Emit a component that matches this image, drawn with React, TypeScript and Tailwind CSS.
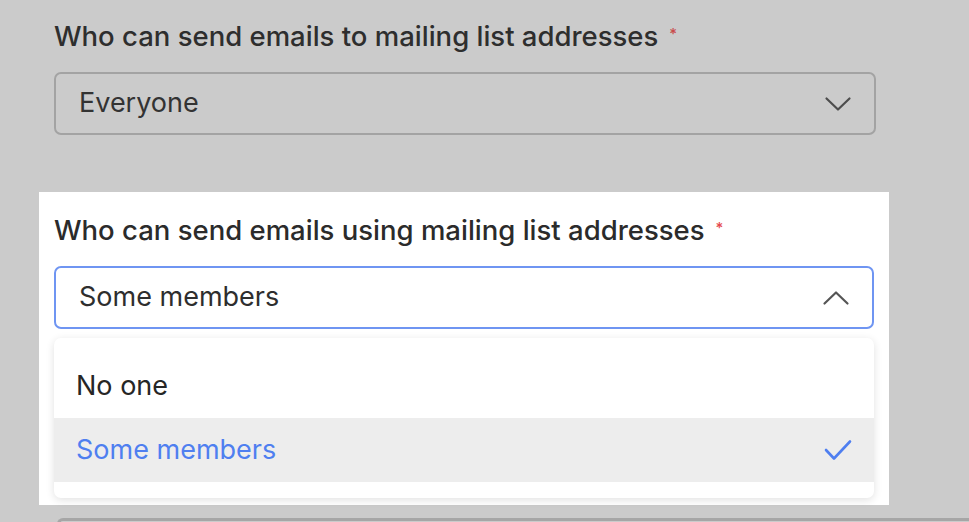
const font = { fontFamily: 'Inter, "Noto Sans", sans-serif' };

function Label({ text, dim }: { text: string; dim?: boolean }) {
  return (
    <div className={`flex items-center h-[30px] text-[27.5px] font-medium ${dim ? 'text-[#2e2e2e]' : 'text-[#2b2b2b]'}`}>
      <span>{text}</span>
      <span className={`ml-[11px] text-[15px] -mt-[6px] ${dim ? 'text-[#c94b4b]' : 'text-[#e5484d]'}`}>*</span>
    </div>
  );
}

function Chevron({ up, color }: { up?: boolean; color: string }) {
  return (
    <svg width="28" height="16" viewBox="0 0 28 16" fill="none" className={up ? 'rotate-180' : ''}>
      <polyline points="2.5,2.5 14,13.5 25.5,2.5" stroke={color} strokeWidth="2.2" strokeLinecap="round" strokeLinejoin="round" />
    </svg>
  );
}

function CheckMark() {
  return (
    <svg width="28" height="22" viewBox="0 0 28 22" fill="none">
      <polyline points="2,11 10,19.5 26,2.5" stroke="#4f7ff0" strokeWidth="2.6" strokeLinecap="round" strokeLinejoin="round" />
    </svg>
  );
}

export default function App() {
  return (
    <div className="w-[969px] h-[522px] overflow-hidden bg-[#cbcbcb] pt-[22px]" style={font}>
      {/* dimmed field */}
      <div className="pl-[54px] w-[876px]">
        <Label text="Who can send emails to mailing list addresses" dim />
        <div className="mt-[20px] h-[63px] rounded-[7px] border-2 border-[#a3a3a3] flex items-center justify-between pl-[23px] pr-[22px]">
          <span className="text-[27px] text-[#333333]">Everyone</span>
          <Chevron color="#4d4d4d" />
        </div>
      </div>

      {/* focused field */}
      <div className="ml-[39px] mt-[57px] w-[850px] h-[313px] bg-white px-[15px] pt-[24px]">
        <Label text="Who can send emails using mailing list addresses" />
        <div className="mt-[20px] h-[63px] rounded-[7px] border-2 border-[#6f95f2] flex items-center justify-between pl-[23px] pr-[22px]">
          <span className="text-[27px] text-[#2e2e2e]">Some members</span>
          <Chevron up color="#555555" />
        </div>
        <div className="mt-[9px] rounded-[7px] bg-white shadow-[0_2px_8px_rgba(0,0,0,0.12)] pt-[16px] pb-[16px] overflow-hidden">
          <div className="h-[64px] flex items-center pl-[22px] text-[27px] text-[#262626]">No one</div>
          <div className="h-[64px] flex items-center justify-between pl-[22px] pr-[22px] bg-[#ededed] text-[27px] text-[#4f7ff0]">
            <span>Some members</span>
            <CheckMark />
          </div>
        </div>
      </div>

      {/* next field edge */}
      <div className="ml-[57px] mt-[13px] h-[10px] border-t-[3px] border-l-[3px] border-[#a6a6a6] rounded-tl-[6px]" />
    </div>
  );
}
